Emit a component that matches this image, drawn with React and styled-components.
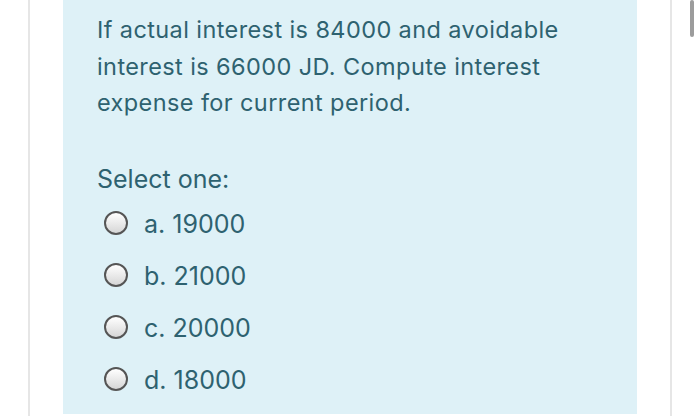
import React from "react";
import styled, { createGlobalStyle } from "styled-components";

const GlobalStyle = createGlobalStyle`
  html, body {
    margin: 0;
    padding: 0;
    background: #ffffff;
  }
  body {
    font-family: Inter, "Liberation Sans", Arial, sans-serif;
  }
`;

const Page = styled.div`
  display: flex;
  height: 416px;
  overflow: hidden;
  position: relative;
`;

const Card = styled.div`
  margin-left: 28px;
  width: 644px;
  box-sizing: border-box;
  border-left: 2px solid #e6e6e6;
  border-right: 2px solid #e6e6e6;
  padding: 0 33px;
  height: 416px;
`;

const Formulation = styled.div`
  width: 574px;
  height: 414px;
  box-sizing: border-box;
  background: #def1f7;
  color: #2e6270;
  padding: 12px 34px 0;
`;

const Question = styled.p`
  margin: 0 0 39px;
  font-size: 23.5px;
  letter-spacing: 0.4px;
  line-height: 36.5px;
`;

const Prompt = styled.div`
  font-size: 25px;
  line-height: 37px;
`;

const Option = styled.label`
  display: flex;
  align-items: center;
  height: 52px;
  padding-left: 7px;
  font-size: 25px;
`;

const Radio = styled.span`
  width: 20px;
  height: 20px;
  border-radius: 50%;
  border: 2px solid #555555;
  background: linear-gradient(#ffffff, #d6d6d6);
  margin-right: 16px;
  margin-top: -2px;
  flex: none;
`;

const Scrollbar = styled.div`
  position: absolute;
  top: 0;
  left: 690px;
  width: 4px;
  height: 37px;
  border-radius: 2px;
  background: #9c9c9c;
`;

const options = ["a. 19000", "b. 21000", "c. 20000", "d. 18000"];

export default function App() {
  return (
    <Page>
      <GlobalStyle />
      <Card>
        <Formulation>
          <Question>
            If actual interest is 84000 and avoidable interest is 66000 JD. Compute interest expense for current
            period.
          </Question>
          <Prompt>Select one:</Prompt>
          {options.map((o) => (
            <Option key={o}>
              <Radio />
              {o}
            </Option>
          ))}
        </Formulation>
      </Card>
      <Scrollbar />
    </Page>
  );
}
